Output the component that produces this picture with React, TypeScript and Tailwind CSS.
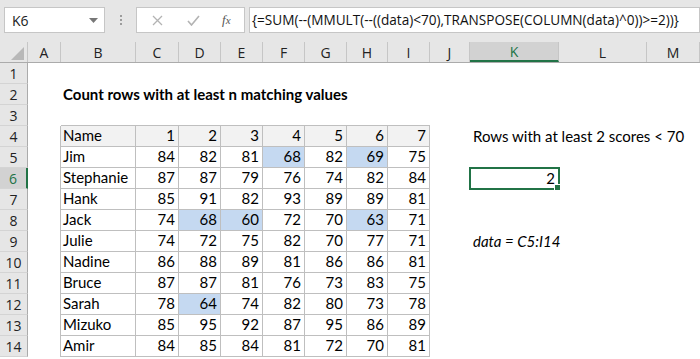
const cols = [
  { key: "A", w: 33 },
  { key: "B", w: 75 },
  { key: "C", w: 43 },
  { key: "D", w: 42 },
  { key: "E", w: 42 },
  { key: "F", w: 42 },
  { key: "G", w: 42 },
  { key: "H", w: 41 },
  { key: "I", w: 42 },
  { key: "J", w: 40 },
  { key: "K", w: 89 },
  { key: "L", w: 88 },
  { key: "M", w: 53 },
];

const people: [string, number[]][] = [
  ["Jim", [84, 82, 81, 68, 82, 69, 75]],
  ["Stephanie", [87, 87, 79, 76, 74, 82, 84]],
  ["Hank", [85, 91, 82, 93, 89, 89, 81]],
  ["Jack", [74, 68, 60, 72, 70, 63, 71]],
  ["Julie", [74, 72, 75, 82, 70, 77, 71]],
  ["Nadine", [86, 88, 89, 81, 86, 86, 81]],
  ["Bruce", [87, 87, 81, 76, 73, 83, 75]],
  ["Sarah", [78, 64, 74, 82, 80, 73, 78]],
  ["Mizuko", [85, 95, 92, 87, 95, 86, 89]],
  ["Amir", [84, 85, 84, 81, 72, 70, 81]],
];

const font = { fontFamily: "Lato, 'Liberation Sans', sans-serif" };

function Cell({ children, className = "" }: { children?: React.ReactNode; className?: string }) {
  return (
    <div className={"h-[21px] flex items-end pb-[2px] text-[15px] leading-[17px] text-black overflow-visible whitespace-nowrap " + className}>
      {children}
    </div>
  );
}

function tableCell(row: number, col: number) {
  // row: sheet row 1..14, col: 0=A .. 12=M
  const inTable = row >= 4 && row <= 14 && col >= 1 && col <= 8;
  const leftEdge = row >= 4 && row <= 14 && col === 0;
  const aboveTable = row === 3 && col >= 1 && col <= 8;
  let cls = "";
  if (inTable) cls += " border-r border-b border-[#bfbfbf]";
  if (leftEdge || aboveTable) cls += leftEdge ? " border-r border-[#bfbfbf]" : " border-b border-[#bfbfbf]";
  if (inTable && row === 4) cls += " bg-[#f2f2f2]";
  return cls;
}

const low = (v: number) => v < 70;

export default function App() {
  const rows = Array.from({ length: 14 }, (_, i) => i + 1);

  const content = (row: number, col: number): React.ReactNode => {
    if (row === 2 && col === 1)
      return <span className="pl-[2px] font-bold">Count rows with at least n matching values</span>;
    if (row === 4 && col === 1) return <span className="pl-[2px]">Name</span>;
    if (row === 4 && col >= 2 && col <= 8) return <span className="ml-auto pr-[3px]">{col - 1}</span>;
    if (row >= 5 && col === 1) return <span className="pl-[2px]">{people[row - 5][0]}</span>;
    if (row >= 5 && col >= 2 && col <= 8) return <span className="ml-auto pr-[3px]">{people[row - 5][1][col - 2]}</span>;
    if (row === 4 && col === 10) return <span className="pl-[3px]">Rows with at least 2 scores &lt; 70</span>;
    if (row === 9 && col === 10) return <span className="pl-[3px] italic">data = C5:I14</span>;
    return null;
  };

  return (
    <div className="w-[700px] h-[359px] overflow-hidden bg-white relative" style={font}>
      {/* formula bar */}
      <div className="h-[42px] bg-[#e6e6e6] flex items-start pt-[7px]" style={{ fontFamily: "'Open Sans', 'Liberation Sans', sans-serif" }}>
        <div className="ml-[4px] w-[101px] h-[26px] bg-white border border-[#c6c6c6] flex items-center justify-between pl-[7px] pr-[6px]">
          <span className="text-[14px] text-[#222]">K6</span>
          <svg width="9" height="5" viewBox="0 0 9 5"><path d="M0 0h9L4.5 5z" fill="#777" /></svg>
        </div>
        <div className="w-[31px] h-[26px] flex flex-col items-center justify-center gap-[2px]">
          <span className="w-[2px] h-[2px] bg-[#9c9c9c]" />
          <span className="w-[2px] h-[2px] bg-[#9c9c9c]" />
          <span className="w-[2px] h-[2px] bg-[#9c9c9c]" />
        </div>
        <div className="w-[109px] h-[26px] bg-white border border-[#c6c6c6] flex items-center">
          <svg className="ml-[15px]" width="11" height="11" viewBox="0 0 11 11">
            <path d="M1 1l9 9M10 1l-9 9" stroke="#b3b3b3" strokeWidth="1.3" />
          </svg>
          <svg className="ml-[24px]" width="13" height="11" viewBox="0 0 13 11">
            <path d="M1 6l3.5 4L12 1" stroke="#b3b3b3" strokeWidth="1.6" fill="none" />
          </svg>
          <span className="ml-[22px] text-[13px] italic text-[#555]" style={{ fontFamily: "'Liberation Serif', serif" }}>
            f<span className="text-[11px]">x</span>
          </span>
        </div>
        <div className="ml-[4px] flex-1 h-[26px] bg-white border border-[#c6c6c6] flex items-center pl-[2px]">
          <span className="text-[13.6px] text-[#111] whitespace-nowrap">
            {"{=SUM(--(MMULT(--((data)<70),TRANSPOSE(COLUMN(data)^0))>=2))}"}
          </span>
        </div>
      </div>

      {/* column headers */}
      <div className="flex h-[21px] bg-[#e6e6e6] border-b border-[#ababab]" style={{ fontFamily: "'Open Sans', 'Liberation Sans', sans-serif" }}>
        <div className="w-[28px] shrink-0 flex items-end justify-end pr-[3px] pb-[2px] border-r border-[#c6c6c6]">
          <svg width="13" height="13" viewBox="0 0 13 13"><path d="M13 0V13H0z" fill="#b8b8b8" /></svg>
        </div>
        {cols.map((c) => (
          <div
            key={c.key}
            style={{ width: c.w }}
            className={
              "shrink-0 flex items-center justify-center text-[14px] border-r border-[#c6c6c6] " +
              (c.key === "K" ? "bg-[#d2d2d2] text-[#217346] border-b-2 border-b-[#217346]" : "text-[#222]")
            }
          >
            {c.key}
          </div>
        ))}
      </div>

      {/* grid */}
      {rows.map((r) => (
        <div key={r} className="flex h-[21px]">
          <div
            className={
              "w-[28px] shrink-0 flex items-center justify-center text-[14px] border-b border-[#d4d4d4] " +
              (r === 6 ? "bg-[#d2d2d2] text-[#217346] border-r-2 border-r-[#217346]" : "bg-[#e6e6e6] text-[#222] border-r border-r-[#ababab]")
            }
            style={{ fontFamily: "'Open Sans', 'Liberation Sans', sans-serif" }}
          >
            {r}
          </div>
          {cols.map((c, ci) => {
            const isVal = r >= 5 && ci >= 2 && ci <= 8;
            const hl = isVal && low(people[r - 5][1][ci - 2]);
            return (
              <div key={c.key} style={{ width: c.w }} className="shrink-0 relative">
                <Cell className={tableCell(r, ci) + (hl ? " bg-[#c5d9f1]" : "")}>{content(r, ci)}</Cell>
                {r === 6 && c.key === "K" && (
                  <div className="absolute inset-[-1px] border-2 border-[#217346] flex items-end justify-end pr-[3px] pb-[1px] text-[15px] leading-[17px]">
                    2
                    <span className="absolute right-[-3px] bottom-[-3px] w-[5px] h-[5px] bg-[#217346] border border-white box-content" />
                  </div>
                )}
              </div>
            );
          })}
        </div>
      ))}
    </div>
  );
}
